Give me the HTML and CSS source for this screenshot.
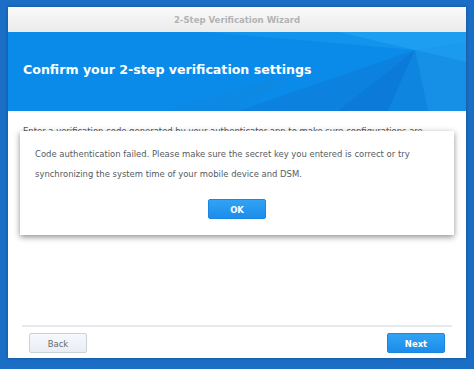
FILE: index.html
```html
<!DOCTYPE html>
<html>
<head>
<meta charset="utf-8">
<link rel="stylesheet" href="styles.css">
</head>
<body>
<div class="window">
  <div class="titlebar">2-Step Verification Wizard</div>
  <div class="banner">
    <svg class="banner-art" width="458" height="79" viewBox="0 0 458 79" preserveAspectRatio="none">
      <polygon points="200,0 458,0 458,10 407,18" fill="#1394ec"/>
      <polygon points="330,0 458,0 458,18 407,18" fill="#1e9ef0"/>
      <polygon points="230,79 407,18 330,79" fill="#0c82de"/>
      <polygon points="330,79 407,18 380,79" fill="#0b7ad8"/>
      <polygon points="407,18 458,30 458,79 420,79" fill="#168fe6"/>
      <polygon points="407,18 420,79 380,79" fill="#0e86e0"/>
      <polygon points="407,18 458,10 458,30" fill="#1c9bee"/>
      <polygon points="160,79 290,40 230,79" fill="#0d88e3"/>
    </svg>
    <h1 class="banner-title">Confirm your 2-step verification settings</h1>
  </div>
  <div class="content">
    <p class="intro">Enter a verification code generated by your authenticator app to make sure configurations are</p>
  </div>
  <div class="footer">
    <button class="btn btn-light">Back</button>
    <button class="btn btn-blue">Next</button>
  </div>
  <div class="dialog">
    <p class="dialog-text">Code authentication failed. Please make sure the secret key you entered is correct or try synchronizing the system time of your mobile device and DSM.</p>
    <div class="dialog-actions">
      <button class="btn btn-blue">OK</button>
    </div>
  </div>
</div>
</body>
</html>
```
FILE: styles.css
```css
* { box-sizing: border-box; }
html, body { margin: 0; padding: 0; }
body {
  width: 474px;
  height: 369px;
  background: #1a6ec6;
  font-family: "DejaVu Sans Condensed", "DejaVu Sans", sans-serif;
  padding: 7px 8px 11px 8px;
  overflow: hidden;
}
.window {
  position: relative;
  width: 458px;
  height: 351px;
  background: #fff;
  display: flex;
  flex-direction: column;
  box-shadow: 0 0 3px rgba(0,0,0,0.3);
}
.titlebar {
  height: 25px;
  background: linear-gradient(#fafafa, #ebebeb);
  color: #b3b3b3;
  font-weight: bold;
  font-size: 9.5px;
  text-align: center;
  line-height: 25px;
}
.banner {
  position: relative;
  height: 79px;
  background: #0a8be9;
  display: flex;
  align-items: center;
  overflow: hidden;
}
.banner-art {
  position: absolute;
  left: 0;
  top: 0;
}
.banner-title {
  position: relative;
  margin: 0 0 4px 15px;
  color: #fff;
  font-family: "DejaVu Sans", sans-serif;
  font-size: 12.6px;
  font-weight: bold;
}
.content {
  flex: 1;
  padding: 14px 15px 0 15px;
}
.intro {
  margin: 0;
  font-size: 9.4px;
  color: #555;
  white-space: nowrap;
  overflow: hidden;
}
.footer {
  margin: 0 14px;
  border-top: 2px solid #e6eaee;
  padding: 6px 7px 5px 7px;
  display: flex;
  justify-content: space-between;
}
.btn {
  width: 58px;
  height: 20px;
  border-radius: 2px;
  font-family: "DejaVu Sans Condensed", "DejaVu Sans", sans-serif;
  font-size: 9.4px;
  padding: 0;
  cursor: pointer;
}
.btn-light {
  background: linear-gradient(#f6f8fb, #e9eef4);
  border: 1px solid #c9d2dc;
  color: #5f6870;
}
.btn-blue {
  background: linear-gradient(#31a3f5, #1b8deb);
  border: 1px solid #1a86de;
  color: #fff;
  font-weight: bold;
}
.dialog {
  position: absolute;
  left: 12px;
  top: 124px;
  width: 434px;
  height: 104px;
  background: #fff;
  box-shadow: 0 2px 6px rgba(0,0,0,0.45);
  padding: 13px 15px 0 15px;
}
.dialog-text {
  margin: 0;
  font-size: 9.4px;
  line-height: 20px;
  color: #555b61;
}
.dialog-actions {
  display: flex;
  justify-content: center;
  margin-top: 15px;
}
```
